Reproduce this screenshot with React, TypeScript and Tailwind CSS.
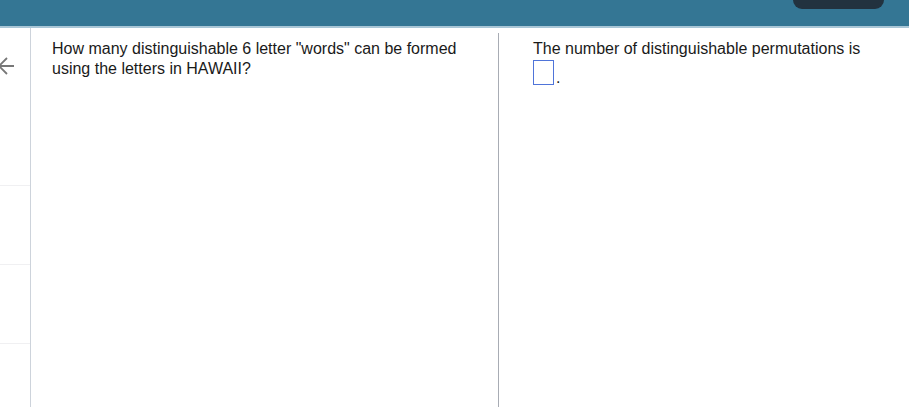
export default function App() {
  return (
    <div className="flex h-[407px] w-[909px] flex-col overflow-hidden bg-white font-['Liberation_Sans',Arial,sans-serif] text-[#1a1a1a]">
      <header className="flex h-[28px] shrink-0 justify-end border-b-2 border-[#a9c6d6] bg-[#347694] pr-[25px]">
        <div className="h-[9px] w-[91px] rounded-b-[12px] bg-[#22323f]" />
      </header>
      <div className="flex min-h-0 flex-1">
        <aside className="flex w-[31px] shrink-0 flex-col border-r border-[#cdd3db]">
          <div className="flex h-[79px] items-start pt-[27px]">
            <svg width="17" height="22" viewBox="0 0 17 22" className="-ml-[2px]">
              <path d="M0 11 H16 M9 3 L1 11 L9 19" fill="none" stroke="#777777" strokeWidth="1.8" />
            </svg>
          </div>
          <div className="h-[79px] border-b border-[#f0f0f2]" />
          <div className="h-[79px] border-b border-[#f0f0f2]" />
          <div className="h-[79px] border-b border-[#f0f0f2]" />
        </aside>
        <section className="w-[467px] shrink-0 pl-[21px] pt-[11px] text-[16px] leading-[20px]">
          <p>
            How many distinguishable 6 letter "words" can be formed
            <br />
            using the letters in HAWAII?
          </p>
        </section>
        <div className="mt-[5px] w-px shrink-0 bg-[#a8acb4]" />
        <section className="flex-1 pl-[34px] pt-[11px] text-[16px] leading-[20px]">
          <p>The number of distinguishable permutations is</p>
          <div className="mt-[1px] flex items-end">
            <span className="inline-block h-[25px] w-[21px] border border-[#4f74d9]" />
            <span className="ml-[2px] leading-[14px]">.</span>
          </div>
        </section>
      </div>
    </div>
  );
}
